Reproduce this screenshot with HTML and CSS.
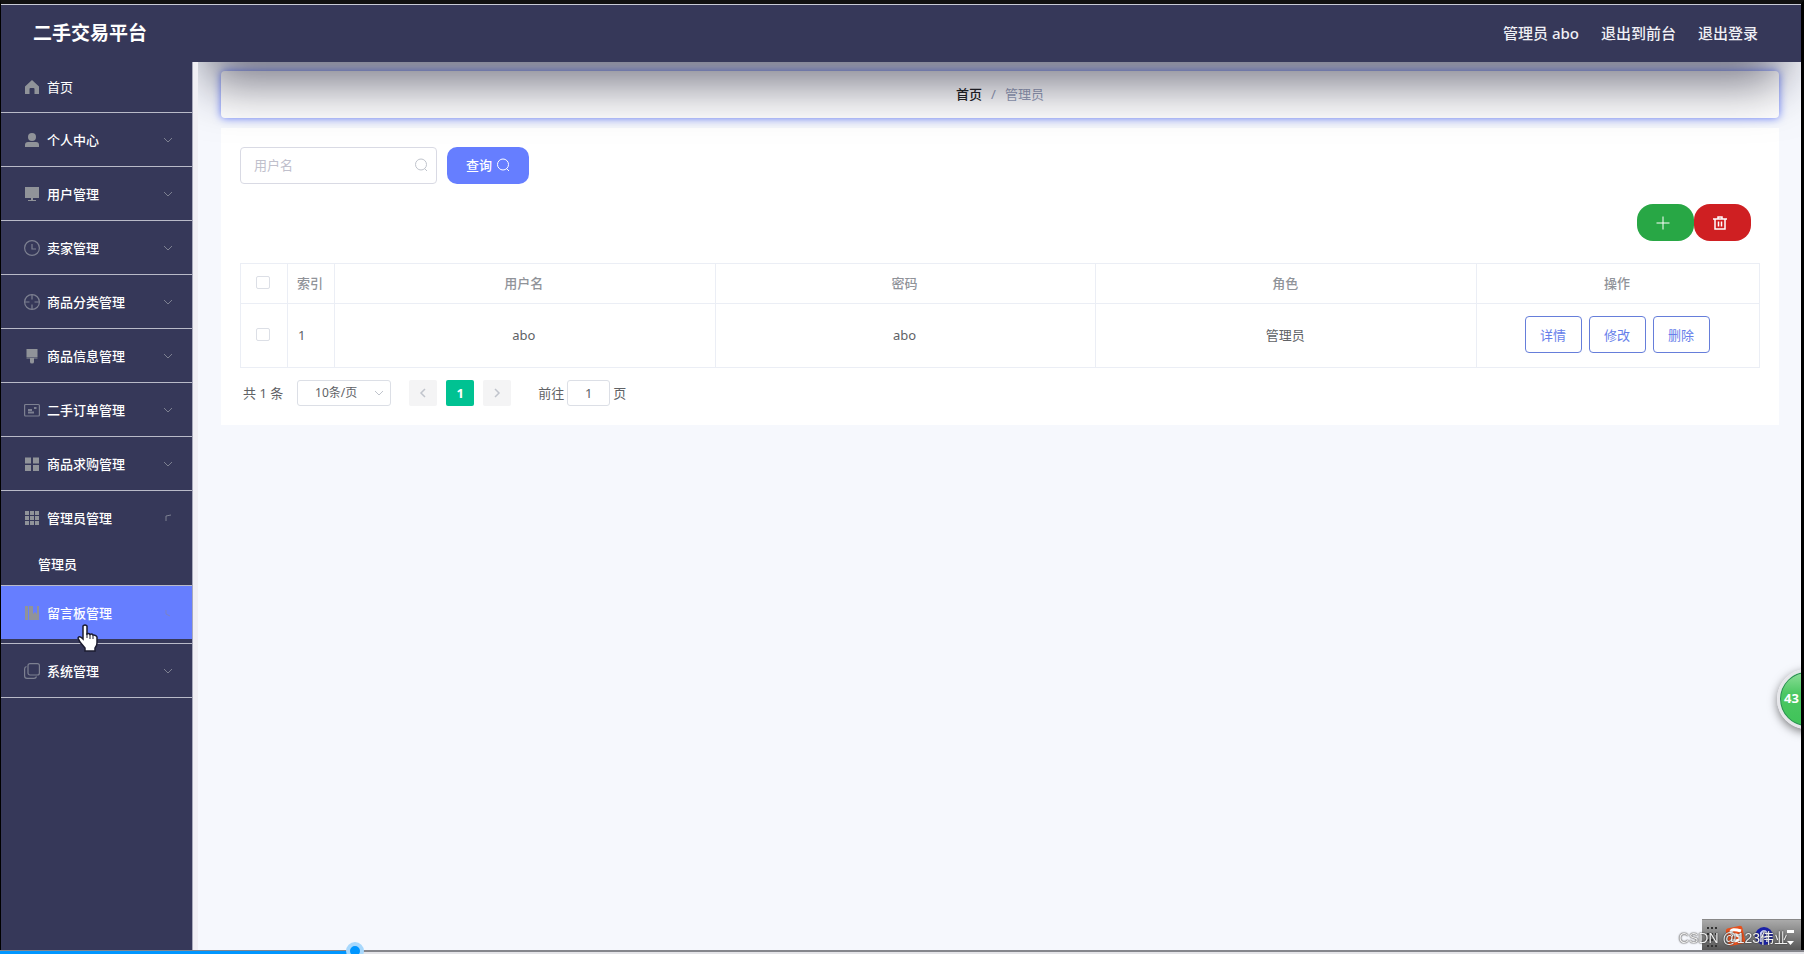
FILE: index.html
```
<!DOCTYPE html>
<html lang="zh-CN">
<head>
    <meta charset="UTF-8">
    <meta name="viewport" content="width=device-width, initial-scale=1.0">
    <title>二手交易平台</title>
    <link rel="stylesheet" href="styles.css">
</head>
<body>
    <header class="header">
        <h1 class="title">二手交易平台</h1>
        <nav class="user-nav">
            <span>管理员 abo</span>
            <a href="#">退出到前台</a>
            <a href="#">退出登录</a>
        </nav>
    </header>

    <div class="layout">
        <aside class="sidebar">
            <ul class="menu">
                <li class="item home">
                    <a href="#">
                        <svg class="icon" viewBox="0 0 16 16"><path d="M8 1 15 7.500V15h-4.500V10a1 1 0 0 0-1-1h-3a1 1 0 0 0-1 1v5H1V7.500z" fill="currentColor"/></svg>
                        <span>首页</span>
                    </a>
                </li>
                <li class="item">
                    <a href="#">
                        <svg class="icon" viewBox="0 0 16 16"><circle cx="8" cy="5" r="4" fill="currentColor"/><path d="M1 15v-2q0-3 3-3h8q3 0 3 3v2z" fill="currentColor"/></svg>
                        <span>个人中心</span>
                        <svg class="arrow" viewBox="0 0 10 10"><path d="M1 3l4 4 4-4"/></svg>
                    </a>
                </li>
                <li class="item">
                    <a href="#">
                        <svg class="icon" viewBox="0 0 16 16"><path d="M1 1h14v11H1zM7 12h2v2h3v1H4v-1h3z" fill="currentColor"/></svg>
                        <span>用户管理</span>
                        <svg class="arrow" viewBox="0 0 10 10"><path d="M1 3l4 4 4-4"/></svg>
                    </a>
                </li>
                <li class="item">
                    <a href="#">
                        <svg class="icon line" viewBox="0 0 16 16"><circle cx="8" cy="8" r="7.400"/><path d="M8 4v5h4"/></svg>
                        <span>卖家管理</span>
                        <svg class="arrow" viewBox="0 0 10 10"><path d="M1 3l4 4 4-4"/></svg>
                    </a>
                </li>
                <li class="item">
                    <a href="#">
                        <svg class="icon line" viewBox="0 0 16 16"><circle cx="8" cy="8" r="7.400"/><path d="M8 1v4.500M8 10.500V15M1 8h4.500M10.500 8H15"/></svg>
                        <span>商品分类管理</span>
                        <svg class="arrow" viewBox="0 0 10 10"><path d="M1 3l4 4 4-4"/></svg>
                    </a>
                </li>
                <li class="item">
                    <a href="#">
                        <svg class="icon" viewBox="0 0 16 16"><path d="M2.500 1h11v8h-11zM2.500 9.500h11v1h-3.500V14q0 1.500-2 1.500T6 14v-3.500H2.500z" fill="currentColor"/></svg>
                        <span>商品信息管理</span>
                        <svg class="arrow" viewBox="0 0 10 10"><path d="M1 3l4 4 4-4"/></svg>
                    </a>
                </li>
                <li class="item">
                    <a href="#">
                        <svg class="icon line" viewBox="0 0 16 16"><rect x=".6" y="2.500" width="14.800" height="11.500" rx="1"/><path d="M4 8h4M4 10.500h6M10 6h2.500" stroke-width="1.800"/></svg>
                        <span>二手订单管理</span>
                        <svg class="arrow" viewBox="0 0 10 10"><path d="M1 3l4 4 4-4"/></svg>
                    </a>
                </li>
                <li class="item">
                    <a href="#">
                        <svg class="icon" viewBox="0 0 16 16"><path d="M1 1.500h6v6H1zM9 1.500h6v6H9zM1 9h6v6H1zM9 9h6v6H9z" fill="currentColor"/></svg>
                        <span>商品求购管理</span>
                        <svg class="arrow" viewBox="0 0 10 10"><path d="M1 3l4 4 4-4"/></svg>
                    </a>
                </li>
                <li class="item">
                    <a href="#">
                        <svg class="icon" viewBox="0 0 16 16"><path d="M1 1h4v4H1zM6 1h4v4H6zM11 1h4v4h-4zM1 6h4v4H1zM6 6h4v4H6zM11 6h4v4h-4zM1 11h4v4H1zM6 11h4v4H6zM11 11h4v4h-4z" fill="currentColor"/></svg>
                        <span>管理员管理</span>
                        <svg class="arrow" viewBox="0 0 10 10"><path d="M3 8V3l5-1"/></svg>
                    </a>
                    <ul class="submenu">
                        <li><a href="#">管理员</a></li>
                    </ul>
                </li>
                <li class="item active">
                    <a href="#">
                        <svg class="icon" viewBox="0 0 16 16"><path d="M1 1h3v14H1zM5 1h4v8l2-2 2 2V1h2v14H5z" fill="currentColor"/></svg>
                        <span>留言板管理</span>
                        <svg class="arrow" viewBox="0 0 10 10"><path d="M3 2v4l4 2"/></svg>
                    </a>
                </li>
                <li class="item">
                    <a href="#">
                        <svg class="icon line" viewBox="0 0 16 16"><rect x="4" y=".6" width="11.400" height="11.400" rx="2"/><path d="M2.500 3.500Q.6 4 .6 6v7q0 2.400 2.400 2.400h7q2 0 2.500-1.900"/></svg>
                        <span>系统管理</span>
                        <svg class="arrow" viewBox="0 0 10 10"><path d="M1 3l4 4 4-4"/></svg>
                    </a>
                </li>
            </ul>
            <svg class="cursor" viewBox="0 0 22 28"><path d="M6 2q2-2 4 0v8q2-1 3 .500 2-1 3 .500 3-.500 4 2v6q0 3-2 5v3H8v-3l-5-6-2-4q1-3 5 1z" fill="#fff" stroke="#1c1c30" stroke-width="1.500"/><path d="M10 9v5M13 10.500V15M16 11v4" fill="none" stroke="#1c1c30"/></svg>
        </aside>

        <main class="main">
            <nav class="breadcrumb">
                <a href="#">首页</a>
                <span class="sep">/</span>
                <span>管理员</span>
            </nav>

            <section class="panel">
                <form class="search">
                    <div class="search-box">
                        <input type="text" placeholder="用户名" aria-label="用户名">
                        <svg viewBox="0 0 14 14"><circle cx="7" cy="6.500" r="5.500"/><path d="M10.500 10.500l2.500 2.500"/></svg>
                    </div>
                    <button class="query" type="button">查询
                        <svg viewBox="0 0 14 14"><circle cx="7" cy="6.500" r="5.500"/><path d="M10.500 10.500l2.500 2.500"/></svg>
                    </button>
                </form>

                <div class="actions">
                    <button class="add" type="button" aria-label="新增">
                        <svg viewBox="0 0 14 14"><path d="M7 .5v13M.5 7h13"/></svg>
                    </button>
                    <button class="remove" type="button" aria-label="删除">
                        <svg viewBox="0 0 14 14"><path d="M0 3h14M5 2.500V1h4v1.500M2 3v10h10V3M5.500 5.500v5M8.500 5.500v5" stroke-width="1.500"/></svg>
                    </button>
                </div>

                <table class="table">
                    <colgroup>
                        <col class="col-small">
                        <col class="col-small">
                        <col>
                        <col>
                        <col>
                        <col class="col-ops">
                    </colgroup>
                    <thead>
                        <tr>
                            <th><input type="checkbox" aria-label="全选"></th>
                            <th>索引</th>
                            <th>用户名</th>
                            <th>密码</th>
                            <th>角色</th>
                            <th>操作</th>
                        </tr>
                    </thead>
                    <tbody>
                        <tr>
                            <td><input type="checkbox" aria-label="选择"></td>
                            <td class="index">1</td>
                            <td>abo</td>
                            <td>abo</td>
                            <td>管理员</td>
                            <td>
                                <div class="ops">
                                    <button type="button">详情</button>
                                    <button type="button">修改</button>
                                    <button type="button">删除</button>
                                </div>
                            </td>
                        </tr>
                    </tbody>
                </table>

                <div class="pagination">
                    <span class="total">共 1 条</span>
                    <div class="size">
                        <select aria-label="每页条数">
                            <option>10条/页</option>
                            <option>20条/页</option>
                        </select>
                        <svg viewBox="0 0 10 10"><path d="M1 3l4 4 4-4"/></svg>
                    </div>
                    <div class="pager">
                        <button type="button" aria-label="上一页"><svg viewBox="0 0 10 10"><path d="M7 1L3 5l4 4"/></svg></button>
                        <button class="current" type="button">1</button>
                        <button type="button" aria-label="下一页"><svg viewBox="0 0 10 10"><path d="M3 1l4 4-4 4"/></svg></button>
                    </div>
                    <label class="jump">前往 <input type="text" value="1"> 页</label>
                </div>
            </section>

            <div class="ball">43</div>
        </main>
    </div>

    <div class="tray">
        <svg viewBox="0 0 99 32">
            <path d="M5 8h12M5 14h12M5 20h12M5 26h12" stroke="#333" stroke-width="2" stroke-dasharray="2 2"/>
            <rect x="25" y="7" width="17" height="18" rx="3" fill="#e8501c" transform="rotate(-12 33 16)"/>
            <path d="M39 11q-10-3-10 1 0 2 5 3t4 4q-2 3-9 1" fill="none" stroke="#fff" stroke-width="3"/>
            <circle cx="62" cy="16" r="9" fill="#1b22a8"/>
            <path d="M59 22v-9q3-4 6 0v9M59 17h6" fill="none" stroke="#cdd3ff" stroke-width="2"/>
            <path d="M85 10h7v3h-7zM85 21h7l-3.500 4z" fill="#fff"/>
        </svg>
    </div>
    <div class="watermark">CSDN @123伟业</div>

    <div class="progress">
        <div class="played"></div>
    </div>
</body>
</html>
```

FILE: styles.css
```
*, *::before, *::after {
    box-sizing: border-box;
}
body {
    margin: 0;
    min-height: 100vh;
    display: flex;
    flex-direction: column;
    border: solid #000;
    border-width: 4px 3px 0 1px;
    border-top-color: #111;
    background: #f6f8fd;
    color: #606266;
    font-family: "Noto Sans", "Noto Sans CJK SC", sans-serif;
    font-size: 13px;
    line-height: 20px;
}
a {
    color: inherit;
    text-decoration: none;
}
ul {
    list-style: none;
    margin: 0;
    padding: 0;
}
button, input, select {
    font: inherit;
    margin: 0;
}
button {
    padding: 0;
    cursor: pointer;
}
svg {
    fill: none;
    stroke: none;
}

/* header */
.header {
    height: 58px;
    display: flex;
    align-items: center;
    justify-content: space-between;
    padding: 0 43px 2px 32px;
    border-top: 1px solid #c9cbd6;
    background: #363859;
    color: #fff;
}
.title {
    margin: 0;
    font-size: 19px;
    line-height: 28px;
}
.user-nav {
    display: flex;
    gap: 22px;
    font-size: 15px;
    font-weight: 500;
    color: #f0f0f5;
}

/* sidebar */
.layout {
    flex: 1;
    display: flex;
}
.sidebar {
    width: 192px;
    background: #363859;
    border-right: 1px solid #a9aabb;
    position: relative;
}
.item {
    border-bottom: 1px solid #b9bac8;
    color: #fff;
    font-weight: 500;
}
.item > a {
    height: 53px;
    display: flex;
    align-items: center;
    gap: 7px;
    padding: 0 19px 0 23px;
}
.item.home > a {
    height: 50px;
    font-weight: 400;
}
.icon {
    width: 16px;
    height: 16px;
    color: #909399;
}
.icon.line {
    stroke: #7d8091;
    stroke-width: 1.2;
}
.arrow {
    width: 10px;
    height: 10px;
    margin-left: auto;
    stroke: #7d8091;
}
.submenu a {
    display: block;
    height: 41px;
    line-height: 41px;
    padding-left: 37px;
}
.item.active {
    padding-bottom: 4px;
}
.item.active > a {
    background: #667eff;
}
.item.active .arrow {
    stroke: #7a83c4;
}
.cursor {
    position: absolute;
    left: 76px;
    top: 562px;
    width: 22px;
    height: 28px;
}

/* content */
.main {
    flex: 1;
    min-width: 0;
    padding: 9px 22px 30px 23px;
    border-left: 5px solid #f0eff4;
    position: relative;
    overflow: hidden;
}
/* shadow that the header throws on the content */
.main::before {
    content: "";
    position: absolute;
    left: -16px;
    right: -4px;
    top: -150px;
    height: 150px;
    box-shadow: 0 46px 50px -24px rgba(10, 10, 35, .56);
    z-index: 1;
    pointer-events: none;
}
.breadcrumb {
    height: 47px;
    display: flex;
    align-items: center;
    justify-content: center;
    gap: 9px;
    margin-bottom: 10px;
    padding-bottom: 2px;
    border-radius: 4px;
    background: #fff;
    box-shadow: 0 0 8px #667eff;
    color: #97a0b8;
}
.breadcrumb a {
    color: #222;
    font-weight: 500;
}
.panel {
    padding: 19px;
    background: #fff;
}
.search {
    display: flex;
    gap: 10px;
}
.search svg {
    width: 14px;
    height: 14px;
    stroke: #c0c4cc;
}
.search-box {
    width: 197px;
    position: relative;
}
.search-box input {
    width: 100%;
    height: 37px;
    padding: 0 13px 2px;
    border: 1px solid #d9dae4;
    border-radius: 4px;
}
.search-box input::placeholder {
    color: #c0c0cc;
}
.search-box svg {
    position: absolute;
    right: 9px;
    top: 11px;
}
.query {
    width: 82px;
    height: 37px;
    display: flex;
    align-items: center;
    justify-content: center;
    gap: 4px;
    padding-bottom: 2px;
    border: 0;
    border-radius: 10px;
    background: #667eff;
    color: #fff;
    font-weight: 500;
}
.query svg {
    stroke: #fff;
}
.actions {
    display: flex;
    justify-content: flex-end;
    margin: 20px 9px 22px;
}
.actions button {
    width: 57px;
    height: 37px;
    display: flex;
    align-items: center;
    justify-content: center;
    padding-right: 5px;
    border: 0;
    border-radius: 16px;
}
.actions .add {
    background: #28a745;
}
.actions .remove {
    background: #cf1f22;
}
.actions svg {
    width: 14px;
    height: 14px;
    stroke: #fff;
}

/* table */
.table {
    width: 100%;
    table-layout: fixed;
    border-collapse: collapse;
}
.col-small {
    width: 47px;
}
.col-ops {
    width: 283px;
}
.table th, .table td {
    height: 40px;
    padding: 0 2px 2px 0;
    border: 1px solid #ebeef5;
    text-align: center;
}
.table th {
    color: #909399;
    font-weight: 500;
}
.table td {
    height: 64px;
}
.table .index {
    padding-left: 10px;
    text-align: left;
}
.table input {
    appearance: none;
    display: block;
    width: 14px;
    height: 13px;
    margin: 0 auto;
    border: 1px solid #dcdfe6;
    border-radius: 2px;
}
.ops {
    display: flex;
    justify-content: center;
    gap: 7px;
}
.ops button {
    width: 57px;
    height: 37px;
    border: 1px solid #667eda;
    border-radius: 4px;
    background: #fff;
    color: #667eea;
}

/* pagination */
.pagination {
    display: flex;
    align-items: center;
    margin-top: 12px;
    padding-left: 3px;
}
.pagination svg {
    width: 10px;
    height: 10px;
    stroke: #c0c4cc;
}
.size {
    position: relative;
    width: 94px;
    margin: 0 18px 0 14px;
}
.size select {
    appearance: none;
    display: block;
    width: 100%;
    height: 26px;
    padding: 0 24px 0 8px;
    border: 1px solid #dcdfe6;
    border-radius: 3px;
    background: #fff;
    color: #606266;
    font-size: 12px;
    text-align: center;
    text-align-last: center;
}
.size svg {
    position: absolute;
    right: 7px;
    top: 8px;
}
.pager {
    display: flex;
    gap: 9px;
    margin-right: 27px;
}
.pager button {
    width: 28px;
    height: 26px;
    border: 0;
    border-radius: 2px;
    background: #f4f4f5;
}
.pager svg {
    display: block;
    margin: 0 auto;
    stroke-width: 1.5;
}
.pager .current {
    background: #00c292;
    color: #fff;
    font-weight: 700;
}
.jump {
    display: flex;
    gap: 3px;
    align-items: center;
}
.jump input {
    width: 43px;
    height: 26px;
    padding: 0;
    border: 1px solid #dcdfe6;
    border-radius: 3px;
    color: #606266;
    text-align: center;
}

/* things floating over the page */
.ball {
    position: absolute;
    right: -36px;
    top: 607px;
    width: 60px;
    height: 60px;
    padding-left: 4px;
    border: 3px solid #e6e6ea;
    border-radius: 50%;
    background: linear-gradient(#8fe09a, #4cc763 40%, #3fc358);
    box-shadow: inset 0 0 0 1px #2b8a55, 0 3px 10px rgba(0, 0, 0, .5);
    color: #fff;
    font-weight: 700;
    line-height: 52px;
}
.tray {
    position: fixed;
    right: 3px;
    bottom: 3px;
    width: 99px;
    height: 32px;
    background: linear-gradient(#aaa, #555);
    border-top: 1px solid #888;
}
.tray svg {
    display: block;
}
.watermark {
    position: fixed;
    right: 16px;
    bottom: 6px;
    color: #f0f0f0;
    font-family: "Liberation Sans", "Noto Sans CJK SC", sans-serif;
    font-size: 14px;
    text-shadow: 0 0 2px #333, 0 0 1px #333;
}
.progress {
    position: fixed;
    left: 0;
    right: 0;
    bottom: 0;
    height: 4px;
    background: #e4e4e8;
    border-top: 2px solid #85868c;
}
.played {
    position: absolute;
    left: 0;
    bottom: 0;
    width: 355px;
    height: 3px;
    background: #0096ff;
}
.played::after {
    content: "";
    position: absolute;
    right: -9px;
    top: -9px;
    width: 18px;
    height: 18px;
    border: 4px solid #a8d8fc;
    border-radius: 50%;
    background: #0096ff;
}
```
